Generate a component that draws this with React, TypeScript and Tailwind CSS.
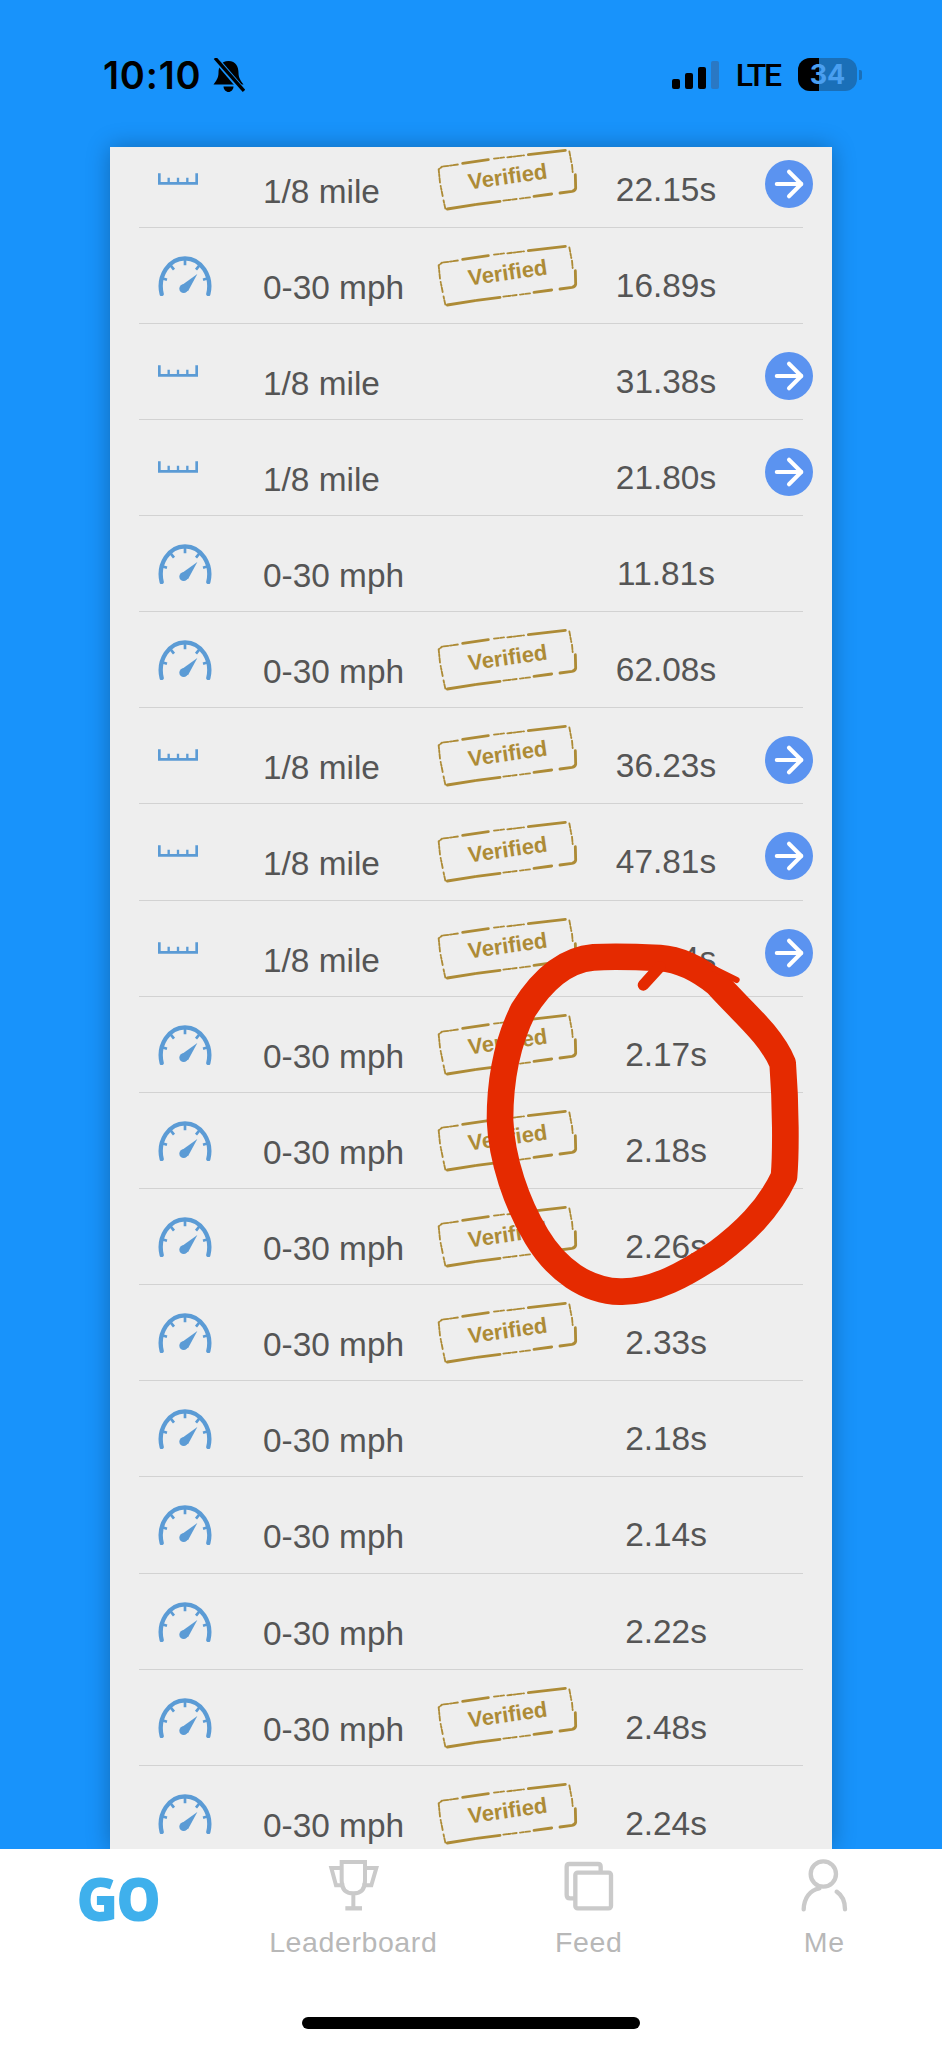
import React from "react";
import { ArrowRight } from "lucide-react";

type Row = { kind: "mile" | "mph"; verified: boolean; time: string; arrow?: boolean };

const rows: Row[] = [
  { kind: "mile", verified: true, time: "22.15s", arrow: true },
  { kind: "mph", verified: true, time: "16.89s" },
  { kind: "mile", verified: false, time: "31.38s", arrow: true },
  { kind: "mile", verified: false, time: "21.80s", arrow: true },
  { kind: "mph", verified: false, time: "11.81s" },
  { kind: "mph", verified: true, time: "62.08s" },
  { kind: "mile", verified: true, time: "36.23s", arrow: true },
  { kind: "mile", verified: true, time: "47.81s", arrow: true },
  { kind: "mile", verified: true, time: "37.64s", arrow: true },
  { kind: "mph", verified: true, time: "2.17s" },
  { kind: "mph", verified: true, time: "2.18s" },
  { kind: "mph", verified: true, time: "2.26s" },
  { kind: "mph", verified: true, time: "2.33s" },
  { kind: "mph", verified: false, time: "2.18s" },
  { kind: "mph", verified: false, time: "2.14s" },
  { kind: "mph", verified: false, time: "2.22s" },
  { kind: "mph", verified: true, time: "2.48s" },
  { kind: "mph", verified: true, time: "2.24s" },
];

function Gauge() {
  return (
    <svg width="54" height="40" viewBox="0 0 162 120" fill="none" stroke="#5b9bd5" className="block">
      <path d="M11 114 C -2 60 33 7 81 7 C 129 7 164 60 151 114" strokeWidth="13" strokeLinecap="round" />
      <path d="M81 8 V28 M36 26 L48 41 M10 66 L27 71 M126 26 L114 41 M152 66 L135 71" strokeWidth="8" />
      <path d="M68 90 L118 54 L90 106 Z" fill="#5b9bd5" stroke="none" />
      <circle cx="77" cy="98" r="13" fill="#5b9bd5" stroke="none" />
    </svg>
  );
}

function Ruler() {
  return (
    <svg width="40" height="12" viewBox="0 0 120 36" fill="none" stroke="#5b9bd5" className="block">
      <path d="M4 1 V31 H116 V1" strokeWidth="8" />
      <path d="M32 14 V31 M60 14 V31 M88 14 V31" strokeWidth="7" />
    </svg>
  );
}

const thick: string[] = [
  "M128 354 L205 343",
  "M325 328 L436 315",
  "M466 388 L467 428 Q466 436 456 438 L420 443",
  "M395 446 L342 453",
  "M240 468 L170 477",
  "M165 478 L82 491",
];
const thin: string[] = [
  "M60 412 L56 372 L66 364 L118 357",
  "M222 340 L252 336 M262 336 L312 330",
  "M448 318 L454 350 M456 358 L458 380",
  "M330 456 L300 460 M290 461 L250 466",
  "M76 490 L70 462 M68 452 L62 422",
];

function Stamp() {
  return (
    <div className="relative flex h-[65px] w-[143px] items-center justify-center">
      <svg className="absolute inset-0" width="143" height="65" viewBox="45 305 429 195" fill="none" stroke="#ad8b36" strokeLinecap="round">
        {thick.map((d) => (
          <path key={d} d={d} strokeWidth="8.5" />
        ))}
        {thin.map((d) => (
          <path key={d} d={d} strokeWidth="5.5" strokeDasharray="14 5 6 4" />
        ))}
      </svg>
      <span className="relative -mt-[4px] ml-[3px] -rotate-[8deg] text-[22px] font-bold leading-none text-[#ad8b36]">Verified</span>
    </div>
  );
}

function TableRow({ row }: { row: Row }) {
  return (
    <div className="h-[96.15px] border-b-[1.5px] border-[#d2d2d2]">
      <div className="grid h-full w-[674px] grid-cols-[124px_172px_143px_176px_59px] items-start">
        <div className={row.kind === "mph" ? "ml-[19px] mt-[28px]" : "ml-[19px] mt-[41px]"}>
          {row.kind === "mph" ? <Gauge /> : <Ruler />}
        </div>
        <div className="mt-[40px] text-[33.4px] leading-[40px] text-[#555555]">
          {row.kind === "mph" ? "0-30 mph" : "1/8 mile"}
        </div>
        <div className="mt-[15px]">{row.verified && <Stamp />}</div>
        <div className="mt-[38px] text-center text-[33.4px] leading-[40px] text-[#555555]">{row.time}</div>
        <div className="mt-[28px] flex justify-end">
          {row.arrow && (
            <div className="flex h-[48px] w-[48px] items-center justify-center rounded-full bg-[#5b93f0] text-white">
              <ArrowRight size={42} strokeWidth={2.3} />
            </div>
          )}
        </div>
      </div>
    </div>
  );
}

function StatusBar() {
  return (
    <div className="flex h-[147px] shrink-0 items-start justify-between pl-[103px] pr-[80px] pt-[56px] text-black">
      <div className="flex items-center gap-[11px]">
        <span className="font-['Inter'] text-[38px] font-semibold leading-[38px] tracking-[0.8px]">10:10</span>
        <svg width="33" height="35" viewBox="0 0 33 35" className="block">
          <path d="M16.5 3 C 9 3 6.5 9 6.5 15 C 6.5 20 4 23 1.5 26.5 H 31.5 C 29 23 26.5 20 26.5 15 C 26.5 9 24 3 16.5 3 Z" fill="#000" />
          <path d="M11.5 28.5 H21.5 C 21.5 31.5 19 34 16.5 34 C 14 34 11.5 31.5 11.5 28.5 Z" fill="#000" />
          <path d="M2 -1 L32 34" stroke="#1893fb" strokeWidth="6" />
          <path d="M3 0 L32 33" stroke="#000" strokeWidth="3.4" />
        </svg>
      </div>
      <div className="flex items-center pt-[2px]">
        <div className="flex h-[28px] items-end gap-[5px]">
          <div className="h-[10px] w-[8px] rounded-[2px] bg-black" />
          <div className="h-[16px] w-[8px] rounded-[2px] bg-black" />
          <div className="h-[22px] w-[8px] rounded-[2px] bg-black" />
          <div className="h-[28px] w-[8px] rounded-[2px] bg-[#2a78c4]" />
        </div>
        <span className="ml-[17px] font-['Roboto'] text-[32px] font-medium leading-[32px] tracking-[-2.2px]">LTE</span>
        <div className="relative ml-[18px] h-[33px] w-[59px] overflow-hidden rounded-[12px] bg-[#1a6fb8]">
          <div className="absolute inset-y-0 left-0 w-[21px] bg-black" />
          <span className="absolute inset-0 flex items-center justify-center font-['Inter'] text-[27px] font-bold leading-none text-[#4a9ff0]">34</span>
        </div>
        <div className="ml-[2px] h-[10px] w-[3px] rounded-r-[2px] bg-[#1a6fb8]" />
      </div>
    </div>
  );
}

function Trophy() {
  return (
    <svg width="90" height="70" viewBox="-6 0 270 210" fill="none" stroke="#cacaca" strokeWidth="12" className="block">
      <path d="M95 36 H165 V92 Q165 130 130 130 Q95 130 95 92 Z" />
      <path d="M95 54 H64 L78 106 H103" />
      <path d="M165 54 H199 L184 106 H157" />
      <path d="M130 130 V172" />
      <path d="M106 175 H156" strokeWidth="13" />
    </svg>
  );
}

function Stack() {
  return (
    <svg width="90" height="70" viewBox="-18 0 270 210" fill="none" stroke="#cacaca" strokeWidth="13" className="block">
      <path d="M152 66 V50 Q152 42 144 42 H58 Q50 42 50 50 V135 Q50 145 60 145 H76" />
      <rect x="76" y="68" width="107" height="107" rx="7" />
    </svg>
  );
}

function Person() {
  return (
    <svg width="90" height="70" viewBox="-3 0 270 210" fill="none" stroke="#cacaca" strokeWidth="13" strokeLinecap="round" className="block">
      <circle cx="130" cy="72" r="38" />
      <path d="M71 178 C72 145 90 120 118 115" />
      <path d="M170 125 C185 135 195 155 195 178" />
    </svg>
  );
}

function Tab({ icon, label }: { icon: React.ReactNode; label: string }) {
  return (
    <div className="flex flex-col items-center">
      {icon}
      <span className="mt-[6px] text-[28.5px] leading-[32px] tracking-[0.6px] text-[#b8b8b8]">{label}</span>
    </div>
  );
}

export default function App() {
  return (
    <div className="relative flex h-[2048px] w-[942px] flex-col overflow-hidden bg-[#1893fb] font-['Liberation_Sans',Arial,sans-serif]">
      <StatusBar />
      <div className="min-h-0 flex-1 px-[110px]">
        <div className="h-full overflow-hidden bg-[#eeeeee] shadow-[0_0_22px_rgba(0,0,0,0.28)]">
          <div className="-mt-[15.5px] px-[29px]">
            {rows.map((r, i) => (
              <TableRow key={i} row={r} />
            ))}
          </div>
        </div>
      </div>
      <div className="relative h-[199px] shrink-0 bg-white">
        <div className="grid grid-cols-4 pt-[1px]">
          <div className="flex justify-center pt-[13px]">
            <span className="scale-x-[0.92] font-['Open_Sans'] text-[61px] font-extrabold leading-[70px] tracking-[-2px] text-[#3fb0ec]">GO</span>
          </div>
          <Tab icon={<Trophy />} label="Leaderboard" />
          <Tab icon={<Stack />} label="Feed" />
          <Tab icon={<Person />} label="Me" />
        </div>
        <div className="absolute bottom-[19px] left-[302px] h-[12px] w-[338px] rounded-full bg-black" />
      </div>
      <svg className="absolute left-[460px] top-[920px]" width="360" height="400" viewBox="0 0 1080 1200" fill="none" stroke="#e52a00" strokeLinecap="round" strokeLinejoin="round">
        <path
          d="M600 114 C 520 110 460 108 400 112 C 310 120 240 190 190 270 C 140 370 120 480 120 600 C 125 720 170 850 230 950 C 290 1050 380 1112 480 1115 C 580 1118 680 1060 770 1000 C 850 940 925 870 972 770 C 978 700 978 560 968 430 C 930 340 840 270 770 190 C 720 150 660 118 600 114 Z"
          strokeWidth="80"
        />
        <path d="M760 145 L 830 180" strokeWidth="18" />
        <path d="M550 195 L 600 140" strokeWidth="34" />
      </svg>
    </div>
  );
}
